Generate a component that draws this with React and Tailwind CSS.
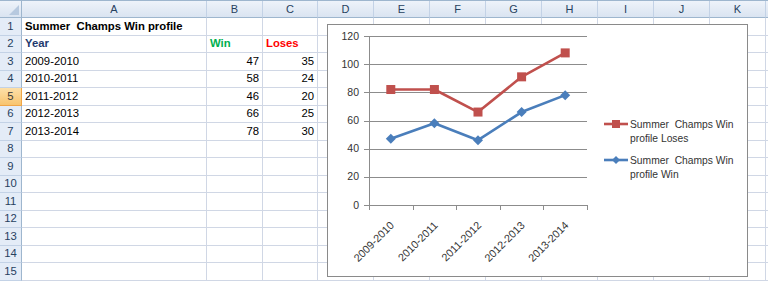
const COLS = [
  { l: "A", w: 185 },
  { l: "B", w: 56 },
  { l: "C", w: 55 },
  { l: "D", w: 56 },
  { l: "E", w: 56 },
  { l: "F", w: 56 },
  { l: "G", w: 56 },
  { l: "H", w: 56 },
  { l: "I", w: 56 },
  { l: "J", w: 56 },
  { l: "K", w: 56 },
  { l: "", w: 56 },
];

const DATA = [
  { year: "2009-2010", win: 47, loses: 35 },
  { year: "2010-2011", win: 58, loses: 24 },
  { year: "2011-2012", win: 46, loses: 20 },
  { year: "2012-2013", win: 66, loses: 25 },
  { year: "2013-2014", win: 78, loses: 30 },
];

const cellContent = (row, col) => {
  if (row === 1 && col === 0)
    return <span className="font-bold text-black whitespace-pre">Summer  Champs Win profile</span>;
  if (row === 2) {
    if (col === 0) return <span className="font-bold text-[#1f3a6e]">Year</span>;
    if (col === 1) return <span className="font-bold text-[#00b050]">Win</span>;
    if (col === 2) return <span className="font-bold text-[#ff0000]">Loses</span>;
  }
  const d = DATA[row - 3];
  if (d) {
    if (col === 0) return d.year;
    if (col === 1) return d.win;
    if (col === 2) return d.loses;
  }
  return null;
};

function Sheet() {
  const rows = Array.from({ length: 15 }, (_, i) => i + 1);
  return (
    <div className="flex flex-col">
      {/* column headers */}
      <div className="flex h-[18px] border-t border-[#9eb6ce]">
        <div className="relative w-[22px] shrink-0 border-r border-b border-[#9eb6ce] bg-gradient-to-b from-[#eef3fa] to-[#dae4f1]">
          <div className="absolute right-[2px] bottom-[2px] w-0 h-0 border-l-[10px] border-l-transparent border-b-[10px] border-b-[#b7c9df]" />
        </div>
        {COLS.map((c, ci) => (
          <div
            key={ci}
            style={{ width: c.w }}
            className="shrink-0 flex items-center justify-center border-r border-r-[#c3d2e6] border-b border-b-[#9eb6ce] bg-gradient-to-b from-[#eef3fa] to-[#dae4f1] text-[11px] text-[#27415f]"
          >
            {c.l}
          </div>
        ))}
      </div>
      {rows.map((r) => (
        <div key={r} className="flex h-[17.5px]">
          <div
            className={
              r === 5
                ? "w-[22px] shrink-0 flex items-center justify-center border-r border-b border-[#f0a648] bg-gradient-to-b from-[#fde0a9] to-[#f8c46e] text-[11.3px] text-[#3a3a3a]"
                : "w-[22px] shrink-0 flex items-center justify-center border-r border-r-[#9eb6ce] border-b border-b-[#c3d2e6] bg-[#e4ecf7] text-[11.3px] text-[#27415f]"
            }
          >
            {r}
          </div>
          {COLS.map((c, ci) => (
            <div
              key={ci}
              style={{ width: c.w }}
              className={
                "shrink-0 flex items-center border-r border-b border-[#d0d7e5] bg-white text-[11.3px] text-black overflow-visible whitespace-nowrap " +
                ((ci === 1 || ci === 2) && r > 2 ? "justify-end pr-[3px]" : "pl-[3px]")
              }
            >
              {cellContent(r, ci)}
            </div>
          ))}
        </div>
      ))}
    </div>
  );
}

function Chart() {
  const L = 41, T = 11, B = 180, R = 259;
  const yOf = (v) => B - (v * (B - T)) / 120;
  const step = (R - L) / DATA.length;
  const xOf = (i) => L + (i + 0.5) * step;
  const blue = DATA.map((d, i) => [xOf(i), yOf(d.win)]);
  const red = DATA.map((d, i) => [xOf(i), yOf(d.win + d.loses)]);
  const pts = (arr) => arr.map((p) => p.join(",")).join(" ");
  const ticks = [0, 20, 40, 60, 80, 100, 120];

  return (
    <div className="absolute left-[327px] top-[24px] w-[421px] h-[253px] border border-[#8a8a8a] bg-white">
      <svg width="419" height="251" className="block" style={{ fontFamily: '"Liberation Sans", Arial, sans-serif' }}>
        {ticks.map((t) => (
          <g key={t}>
            <line x1={L - 5} x2={R} y1={Math.round(yOf(t)) + 0.5} y2={Math.round(yOf(t)) + 0.5} stroke="#8c8c8c" strokeWidth="1" />
            <text x={L - 10} y={yOf(t) + 3.5} textAnchor="end" fontSize="10.5" fill="#333">
              {t}
            </text>
          </g>
        ))}
        <line x1={L + 0.5} x2={L + 0.5} y1={T} y2={B + 1} stroke="#8c8c8c" />
        {Array.from({ length: DATA.length + 1 }, (_, i) => (
          <line key={i} x1={Math.round(L + i * step) + 0.5} x2={Math.round(L + i * step) + 0.5} y1={B} y2={B + 5} stroke="#8c8c8c" />
        ))}
        {DATA.map((d, i) => (
          <text
            key={d.year}
            transform={`translate(${xOf(i) + 4},${B + 21}) rotate(-45)`}
            textAnchor="end"
            fontSize="10.8"
            fill="#333"
          >
            {d.year}
          </text>
        ))}
        <polyline points={pts(red)} fill="none" stroke="#c0504d" strokeWidth="2.6" strokeLinejoin="round" />
        {red.map(([x, y], i) => (
          <rect key={i} x={x - 4.5} y={y - 4.5} width="9" height="9" fill="#c0504d" />
        ))}
        <polyline points={pts(blue)} fill="none" stroke="#4a7ebb" strokeWidth="2.6" strokeLinejoin="round" />
        {blue.map(([x, y], i) => (
          <polygon key={i} points={`${x},${y - 5} ${x + 5},${y} ${x},${y + 5} ${x - 5},${y}`} fill="#4a7ebb" />
        ))}

        {/* legend */}
        <line x1="276" x2="300" y1="99" y2="99" stroke="#c0504d" strokeWidth="2.6" />
        <rect x="284" y="95" width="8" height="8" fill="#c0504d" />
        <text x="302" y="103" fontSize="10.3" fill="#333">
          <tspan x="302" xmlSpace="preserve">Summer  Champs Win</tspan>
          <tspan x="302" dy="14">profile Loses</tspan>
        </text>
        <line x1="276" x2="300" y1="135" y2="135" stroke="#4a7ebb" strokeWidth="2.6" />
        <polygon points="288,131 292,135 288,139 284,135" fill="#4a7ebb" />
        <text x="302" y="139" fontSize="10.3" fill="#333">
          <tspan x="302" xmlSpace="preserve">Summer  Champs Win</tspan>
          <tspan x="302" dy="14">profile Win</tspan>
        </text>
      </svg>
    </div>
  );
}

export default function App() {
  return (
    <div
      className="relative w-[768px] h-[281px] overflow-hidden bg-white"
      style={{ fontFamily: '"Liberation Sans", Arial, sans-serif' }}
    >
      <Sheet />
      <Chart />
    </div>
  );
}
